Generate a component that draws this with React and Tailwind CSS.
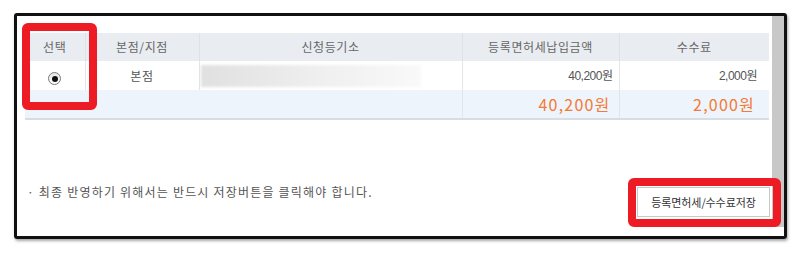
import React from "react";

function Radio() {
  return (
    <span className="inline-flex items-center justify-center w-[13px] h-[13px] rounded-full border border-[#7a7a7a] bg-linear-to-b from-[#e6e6e6] to-white">
      <span className="w-[6px] h-[6px] rounded-full bg-[#111]" />
    </span>
  );
}

export default function App() {
  const num = "font-['Liberation_Sans','Noto_Sans_CJK_KR',sans-serif]";

  return (
    <div className="relative w-[800px] h-[253px] bg-white font-['Noto_Sans_CJK_KR',sans-serif] overflow-hidden">
      {/* 캡처 창 */}
      <div className="ml-[14px] mt-[13px] w-[773px] h-[226px] border-[3px] border-[#111] rounded-[3px] shadow-[1px_2px_3px_rgba(0,0,0,0.35)] flex">
        <div className="flex-1 pt-[17px] pl-[8px] pr-[2px]">
          <table className="table-fixed border-collapse w-[744px] text-[12px] text-[#666]">
            <colgroup>
              <col className="w-[60px]" />
              <col className="w-[114px]" />
              <col className="w-[263px]" />
              <col className="w-[157px]" />
              <col className="w-[150px]" />
            </colgroup>
            <thead>
              <tr className="h-[28px] bg-[#e9edf1] tracking-[0.6px]">
                <th className="font-normal border-r border-[#dde2e7]">선택</th>
                <th className="font-normal border-r border-[#dde2e7]">본점/지점</th>
                <th className="font-normal border-r border-[#dde2e7]">신청등기소</th>
                <th className="font-normal border-r border-[#dde2e7]">등록면허세납입금액</th>
                <th className="font-normal">수수료</th>
              </tr>
            </thead>
            <tbody>
              <tr className="h-[29px] bg-white text-[#555]">
                <td className="text-center border-r border-[#e2e5e9] pt-[2px]">
                  <Radio />
                </td>
                <td className="text-center border-r border-[#e2e5e9] tracking-[0.6px]">본점</td>
                <td className="border-r border-[#e2e5e9] pl-[1px]">
                  <div className="w-[220px] h-[22px] bg-linear-to-r from-[#e0e0e0] via-[#eeeeee] to-[#f9f9f9] blur-[1.5px]" />
                </td>
                <td className={`text-right pr-[6px] border-r border-[#e2e5e9] tracking-[-0.5px] ${num}`}>40,200원</td>
                <td className={`text-right pr-[12px] tracking-[-0.5px] ${num}`}>2,000원</td>
              </tr>
              <tr className="h-[29px] bg-[#eef4fb] border-b-2 border-[#d9dde2] text-[16px] text-[#f47a35] tracking-[1.2px]">
                <td colSpan={3} className="border-r border-[#e0e5eb]" />
                <td className="text-right pr-[8px] border-r border-[#e0e5eb]">40,200원</td>
                <td className="text-right pr-[14px]">2,000원</td>
              </tr>
            </tbody>
          </table>

          <div className="mt-[64px] flex justify-between items-start">
            <p className="ml-[2px] text-[12px] leading-4 tracking-[1.2px] text-[#555]">
              · 최종 반영하기 위해서는 반드시 저장버튼을 클릭해야 합니다.
            </p>
            <button className="mt-[3px] w-[133px] h-[30px] border border-[#c9c9c9] bg-white text-[11px] tracking-[-0.1px] text-[#333]">
              등록면허세/수수료저장
            </button>
          </div>
        </div>

        {/* 스크롤바 */}
        <div className="w-[12px] shrink-0">
          <div className="h-[211px] bg-[#c8c8c8]" />
        </div>
      </div>

      {/* 강조 표시 */}
      <div className="absolute left-[22px] top-[23px] w-[75px] h-[87px] border-[8px] border-[#ed1c24] rounded-[6px]" />
      <div className="absolute left-[628px] top-[178px] w-[153px] h-[49px] border-[8px] border-[#ed1c24] rounded-[6px]" />
    </div>
  );
}
